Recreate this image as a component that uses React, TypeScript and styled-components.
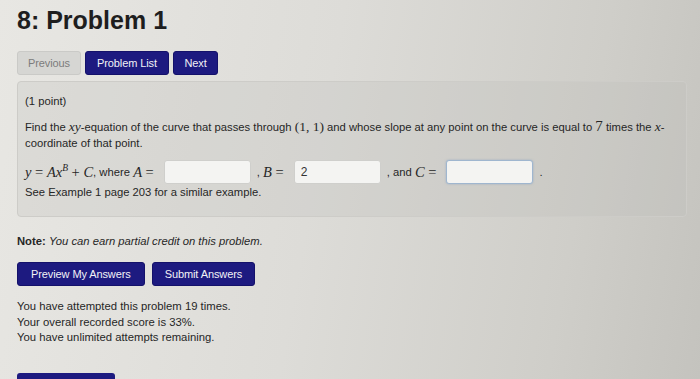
import styled, { createGlobalStyle } from 'styled-components';

const GlobalStyle = createGlobalStyle`
  html, body {
    margin: 0;
    padding: 0;
  }
  body {
    background: linear-gradient(100deg, #e8e7e3 0%, #dddcd8 45%, #cfcec9 80%, #c4c3be 100%);
    font-family: 'Liberation Sans', Arial, sans-serif;
    color: #262626;
    height: 379px;
    overflow: hidden;
  }
`;

const Page = styled.div`
  padding: 5px 13px 0 17px;
`;

const Title = styled.h1`
  margin: 0;
  font-size: 25px;
  line-height: 30px;
  font-weight: bold;
  color: #1e1e1e;
`;

const NavRow = styled.div`
  display: flex;
  gap: 4px;
  margin-top: 16px;
`;

const Button = styled.button<{ $muted?: boolean; $pad?: number }>`
  height: 24px;
  padding: 0 ${(p) => p.$pad ?? 9}px;
  border: 1px solid ${(p) => (p.$muted ? '#cacac7' : '#14116a')};
  border-radius: 3px;
  background: ${(p) => (p.$muted ? '#d6d6d3' : '#1d1a80')};
  color: ${(p) => (p.$muted ? '#7c7c7c' : '#f2f2f6')};
  font-family: 'Liberation Sans', Arial, sans-serif;
  font-size: 11px;
  letter-spacing: -0.1px;
  cursor: pointer;
`;

const Panel = styled.div`
  margin-top: 6px;
  height: 136px;
  box-sizing: border-box;
  padding: 11px 8px 0 7px;
  background: rgba(190, 190, 186, 0.28);
  border: 1px solid #cdccc8;
  border-radius: 4px;
  font-size: 11.25px;
  line-height: 16px;
`;

const Para = styled.p<{ $gap?: number }>`
  margin: ${(p) => p.$gap ?? 0}px 0 0 0;
`;

const Line = styled.span`
  white-space: nowrap;
`;

const Math = styled.span<{ $upright?: boolean; $big?: boolean }>`
  font-family: 'Liberation Serif', 'Times New Roman', serif;
  font-style: ${(p) => (p.$upright ? 'normal' : 'italic')};
  font-size: ${(p) => (p.$big ? '15px' : '13.5px')};
`;

const Sup = styled.sup`
  font-size: 9.5px;
  vertical-align: 6px;
  line-height: 0;
`;

const EquationRow = styled.div`
  display: flex;
  align-items: center;
  margin-top: 9px;
  height: 24px;
  white-space: pre;

  ${Math} {
    font-size: 14.5px;
  }
`;

const Answer = styled.input<{ $focus?: boolean }>`
  box-sizing: border-box;
  width: 87px;
  height: 24px;
  margin: 0 6px 0 10px;
  padding: 0 6px;
  border: 1px solid ${(p) => (p.$focus ? '#9fb6cf' : '#cfcfcc')};
  border-radius: 3px;
  background: #f4f4f2;
  box-shadow: ${(p) => (p.$focus ? '0 0 2px rgba(100, 140, 190, 0.5)' : 'none')};
  font-family: 'Liberation Sans', Arial, sans-serif;
  font-size: 12px;
  color: #333;
  outline: none;
`;

const Note = styled.p`
  margin: 16px 0 0 0;
  font-size: 11.25px;
  line-height: 16px;
`;

const ActionRow = styled.div`
  display: flex;
  gap: 7px;
  margin-top: 13px;
`;

const Status = styled.div`
  margin-top: 13px;
  font-size: 11.3px;
  line-height: 15.5px;
`;

const Peek = styled.div`
  margin-top: 27px;
  width: 98px;
  height: 12px;
  background: #1d1a80;
  border-radius: 3px 3px 0 0;
`;

export default function App() {
  return (
    <>
      <GlobalStyle />
      <Page>
        <Title>8: Problem 1</Title>
        <NavRow>
          <Button $muted $pad={10}>Previous</Button>
          <Button $pad={11}>Problem List</Button>
          <Button $pad={10.5}>Next</Button>
        </NavRow>
        <Panel>
          <Para>(1 point)</Para>
          <Para $gap={9}>
            <Line>
              Find the <Math>xy</Math>-equation of the curve that passes through <Math $upright>(1, 1)</Math> and
              whose slope at any point on the curve is equal to <Math $upright $big>7</Math> times the{' '}
              <Math>x</Math>-
            </Line>
            <br />
            coordinate of that point.
          </Para>
          <EquationRow>
            <Math>y</Math>
            <Math $upright> = </Math>
            <Math>
              Ax<Sup>B</Sup>
            </Math>
            <Math $upright> + </Math>
            <Math>C</Math>, where <Math>A</Math>
            <Math $upright> =</Math>
            <Answer />
            , <Math>B</Math>
            <Math $upright> =</Math>
            <Answer defaultValue="2" />
            , and <Math>C</Math>
            <Math $upright> =</Math>
            <Answer $focus />
            .
          </EquationRow>
          <Para>See Example 1 page 203 for a similar example.</Para>
        </Panel>
        <Note>
          <b>Note:</b> <i>You can earn partial credit on this problem.</i>
        </Note>
        <ActionRow>
          <Button $pad={13}>Preview My Answers</Button>
          <Button $pad={12}>Submit Answers</Button>
        </ActionRow>
        <Status>
          You have attempted this problem 19 times.
          <br />
          Your overall recorded score is 33%.
          <br />
          You have unlimited attempts remaining.
        </Status>
        <Peek />
      </Page>
    </>
  );
}
